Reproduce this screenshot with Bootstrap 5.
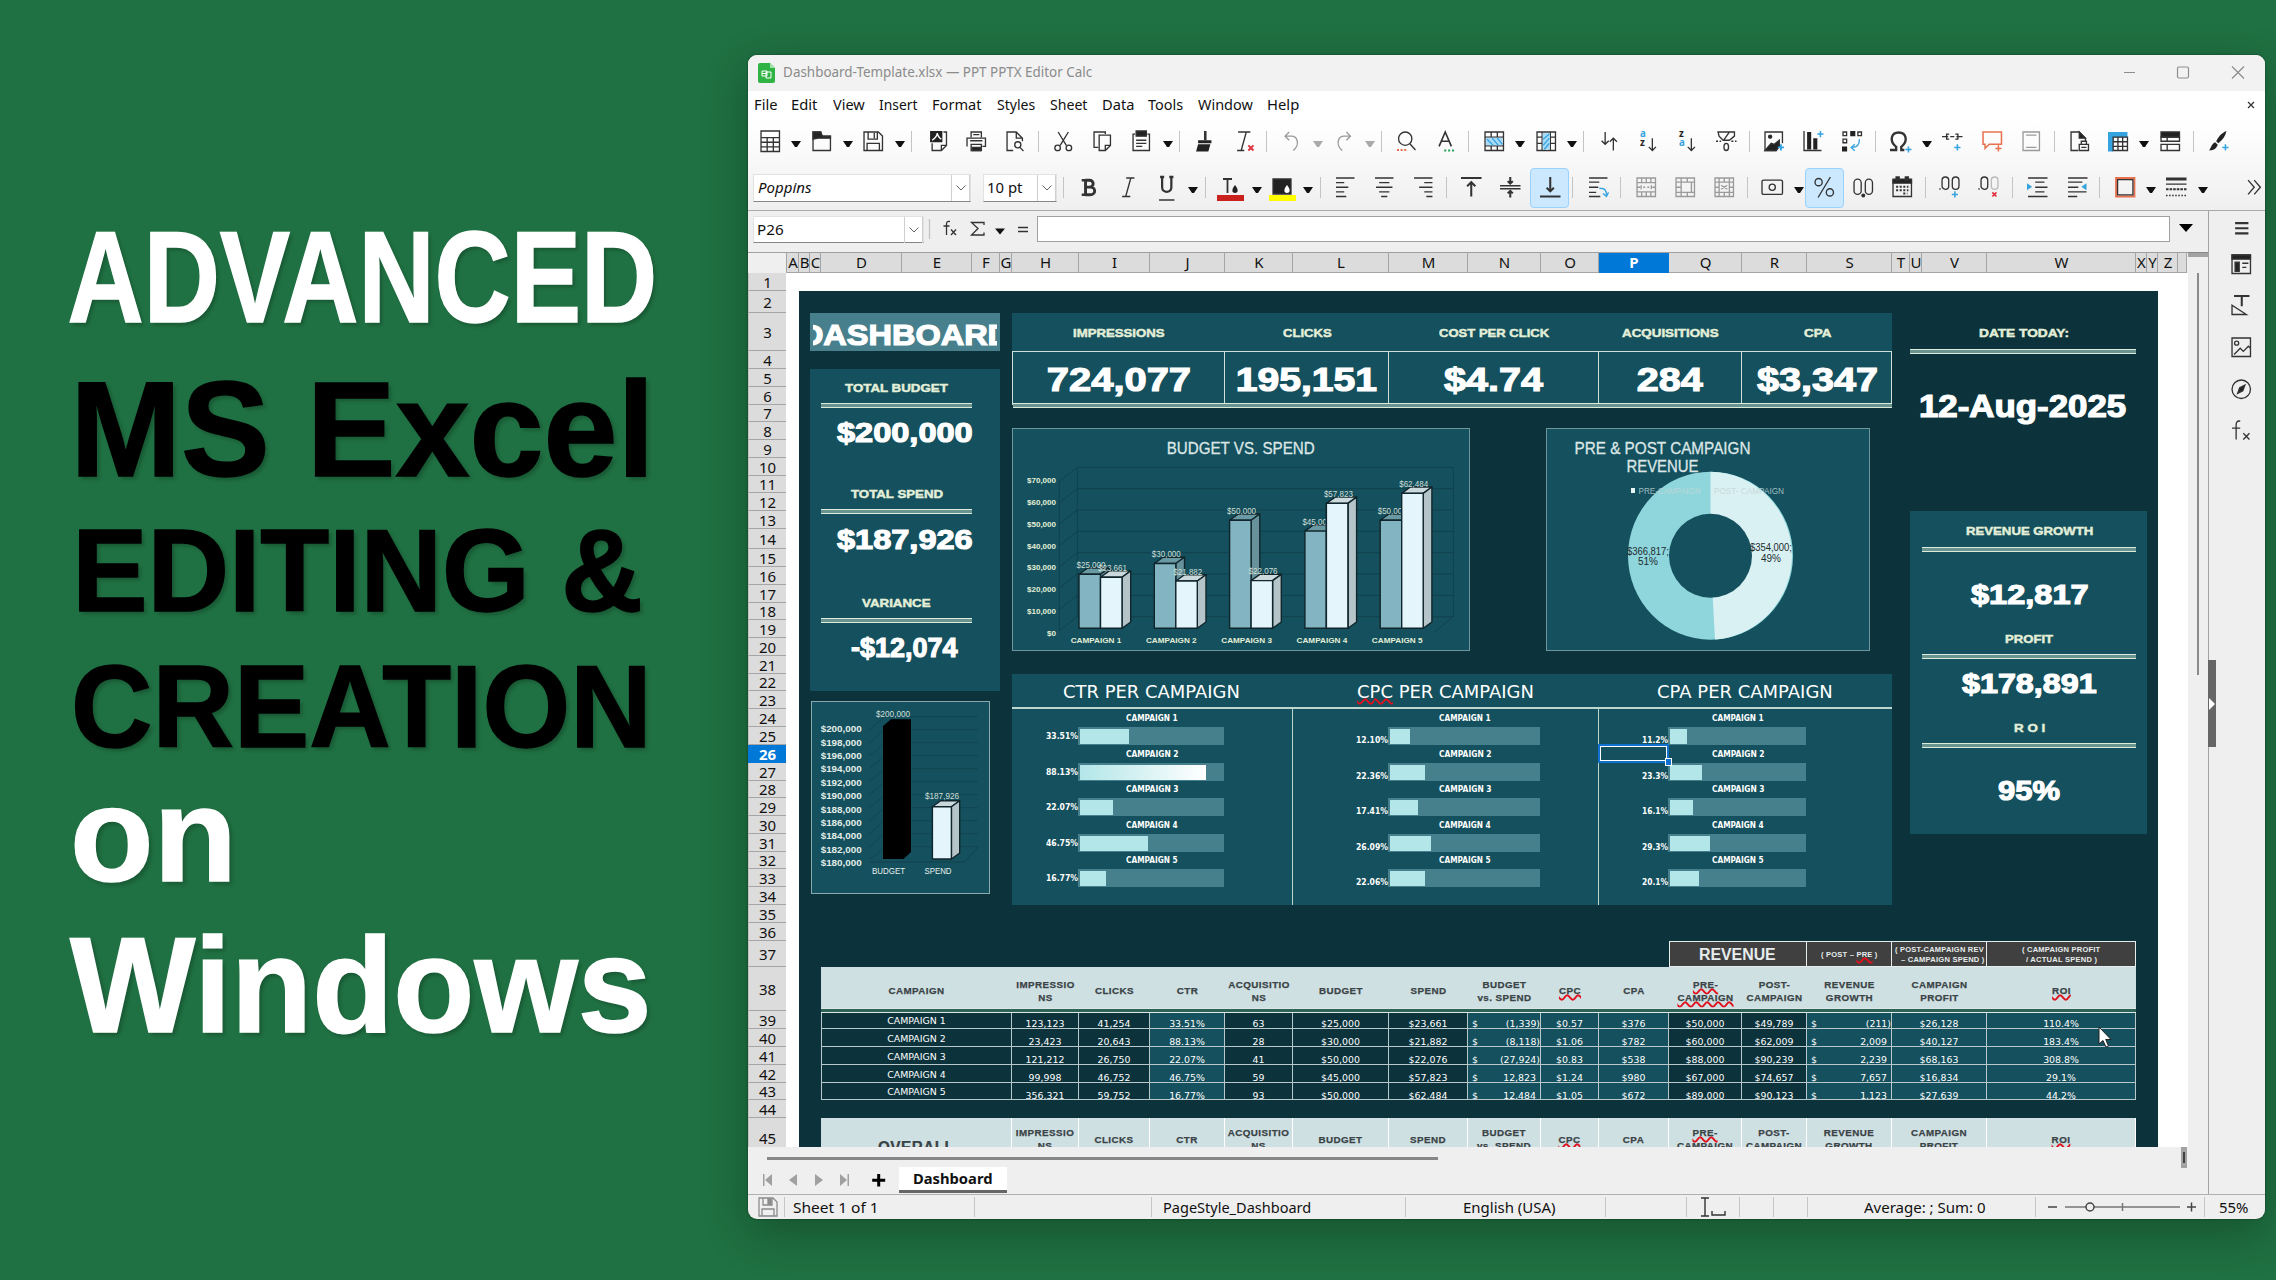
<!DOCTYPE html>
<html lang="en">
<head>
    <meta charset="UTF-8">
    <meta name="viewport" content="width=device-width, initial-scale=1.0">
    <title>Dashboard-Template.xlsx</title>
    <link href="https://cdn.jsdelivr.net/npm/bootstrap@5.3.0/dist/css/bootstrap.min.css" rel="stylesheet">
    <style>
        body {
            width: 2276px;
            height: 1280px;
            overflow: hidden;
            background: #1f7042;
            font-family: "Noto Sans", "Open Sans", sans-serif;
            font-size: 15px;
            line-height: 1;
            color: #111;
        }
        svg { display: block; flex: none; }
        .fit { display: inline-block; white-space: nowrap; text-align: left; flex: none; }
        .fit > span { display: inline-block; transform-origin: 0 50%; }

        /* headline */
        .hero-text {
            width: 748px;
            padding: 201px 0 0 69px;
            font-family: "Liberation Sans", Arial, sans-serif;
            font-weight: 700;
            color: #000;
            text-shadow: 3px 3px 4px rgba(0,0,0,.22);
            -webkit-text-stroke: 1.5px #000;
            flex: none;
        }
        .hero-text div { padding-left: 10px; }
        .hero-text .text-white { -webkit-text-stroke-color: #fff; }
        .line-1 { font-size: 129px; line-height: 152.6px; }
        .line-2 { font-size: 136px; line-height: 151px; }
        .line-3 { font-size: 116px; line-height: 132.2px; }
        .line-4 { font-size: 116px; line-height: 141px; }
        .line-5 { font-size: 134px; line-height: 113px; }
        .line-6 { font-size: 136px; line-height: 189px; }
        .hero-text .line-1, .hero-text .line-6 { padding-left: 1px; }
        .hero-text .line-4, .hero-text .line-5 { padding-left: 6px; }

        /* application window */
        .app-window {
            width: 1517px;
            height: 1164px;
            margin-top: 55px;
            border-radius: 9px;
            background: #efefef;
            box-shadow: 0 14px 44px rgba(0,20,0,.3), 0 0 2px rgba(0,0,0,.5);
            overflow: hidden;
            flex: none;
        }
        .title-bar { height: 36px; background: #f2f2f2; color: #8b8b8b; padding: 0 18px 0 10px; }
        .menu-bar { height: 28px; background: #fff; padding: 0 10px 1px 7px; gap: 14.8px; }
        .tool-area { background: linear-gradient(#fff, #fbfbfb 30%, #efefef); border-bottom: 1.5px solid #a9a9a9; height: 92px; }
        .tool-row { padding-left: 2.4px; }
        .tool-row.first { height: 45px; }
        .tool-row.second { height: 47px; }
        .tool { width: 39.2px; height: 40px; border-radius: 4px; }
        .tool.on { background: #cce8ff; border: 1px solid #99d1ff; }
        .caret { width: 12.7px; padding-left: 1.7px; margin-top: 5px; }
        .caret::before { content: ""; display: block; width: 10px; border: 4.5px solid transparent; border-top: 6px solid #111; border-bottom: 0; }
        .caret.dim::before { border-top-color: #aaa; }
        .bar-sep { width: 8.8px; height: 21px; }
        .bar-sep::before { content: ""; display: block; width: 1px; height: 100%; margin-left: 3px; background: #c4c4c4; }
        .caret + .bar-sep { margin-left: 2.4px; width: 8.8px; }
        .combo { background: #fff; height: 28px; border: 1px solid #e2e2e2; border-bottom: 1.5px solid #868686; padding-left: 4px; }
        .combo .drop { width: 19px; height: 26px; border: 1px solid #cfcfcf; border-width: 0 1px; }
        .font-box { width: 218px; margin-left: 3px; font-style: italic; }
        .size-box { width: 74px; margin: 0 3px 0 12px; }
        .formula-bar { height: 41px; padding: 5px 0 0 5px; }
        .name-box { width: 171px; height: 27px; }
        .formula-input { width: 1133px; height: 26px; background: #fff; border: 1px solid #a0a0a0; margin-left: 8px; }

        /* sheet */
        .col-heads { height: 21px; padding-left: 38px; border-top: 1px solid #a0a0a0; }
        .col-heads > div { background: #dcdcdc; border-right: 1px solid #a5a5a5; border-bottom: 1px solid #a5a5a5; flex: none; overflow: visible; white-space: nowrap; padding-left: 1px; }
        .col-heads > div:first-child { border-left: 1px solid #a5a5a5; }
        .row-heads { width: 39px; height: 874px; overflow: hidden; flex: none; }
        .row-heads > div { background: #dcdcdc; border: 1px solid #a5a5a5; border-top: 0; border-left-color: #c5c5c5; padding-top: 1px; }
        .col-heads .current, .row-heads .current { background: #0078d7; color: #fff; font-weight: 700; border-color: #0078d7; }
        .sheet {
            display: grid;
            position: relative;
            width: 1402px;
            height: 874px;
            margin-left: -1px;
            overflow: hidden;
            background: #fff;
            flex: none;
            font-family: "Liberation Sans", Arial, sans-serif;
            font-weight: 700;
            color: #fff;
        }
        .sheet > * { min-width: 0; min-height: 0; position: relative; }
        .sheet-dark { background: #0c333c; }
        .sheet-panel { background: #14505d; }
        .sheet-title { background: #47808c; font-size: 29px; padding: 6px 3px 0; }
        .sheet-title > div { overflow: hidden; height: 32px; -webkit-text-stroke: 1.2px #fff; }
        .lbl { color: #e3efd8; font-size: 11.5px; padding-top: 3px; -webkit-text-stroke: .45px #e3efd8; }
        .dbl::after, .kpi-value::after {
            content: "";
            position: absolute;
            left: 0;
            right: 0;
            bottom: -3px;
            height: 5px;
            border: 1px solid #dcebdc;
            border-width: 1px 0;
            background: #6a9490;
        }
        .kpi-value { border: 1px solid #cfe0d4; border-width: 1px 1px 0 0; font-size: 34px; padding-top: 1px; }
        .kpi-value::after { right: -1px; }
        .kpi-first { border-left-width: 1px; }
        .big { font-size: 28px; padding-top: 2px; }
        .kpi-value .fit, .big .fit { -webkit-text-stroke: 1.2px #fff; }
        .date-value { font-size: 31px; padding-top: 4px; }
        .bar-title { font: 400 18.5px "DejaVu Sans", sans-serif; border-bottom: 2px solid #bfd6cf; padding: 2px 2px 0 0; }
        .bar-split { border-right: 1.5px solid #bfd6cf; }
        .bar-name { font: 700 8px "DejaVu Sans", sans-serif; }
        .bar-track { background: #47808d; padding: 2px; margin-left: -1px; margin-right: 1px; }
        .bar-fill { height: 15px; background: #b3e6e8; }
        .bar-fill.peak { background: linear-gradient(90deg, #b3e6e8, #fff); }
        .bar-pct { font: 700 8px "DejaVu Sans", sans-serif; padding: 9px 1px 0 0; }
        .bar-pct.mid { padding-top: 1px; }
        .cell-cursor { border: 2px solid #1271cf; outline: 1px solid #1271cf; outline-offset: -1px; box-shadow: inset 0 0 0 1px #fff; margin: -1px 0 0 -1px; }
        .cell-cursor::after { content: ""; position: absolute; right: -5px; bottom: -5px; width: 7px; height: 8px; background: #1271cf; border: 1px solid #fff; }
        .rev-head { background: #404040; border: 1px solid #e6eded; border-left-width: 0; font-size: 7px; line-height: 10.5px; color: #e6ecec; letter-spacing: .2px; white-space: nowrap; padding-top: 2px; }
        .rev-head.first { border-left-width: 1px; font-size: 16px; letter-spacing: 0; }
        .th-cell { background: #cfe0e3; color: #3a4346; font-size: 9.8px; line-height: 13px; letter-spacing: .45px; padding-top: 4px; border-bottom: 1px solid #e9f1f1; -webkit-text-stroke: .25px #3a4346; }
        .th-cell.ruled { border-right: 1px solid #fff; padding-top: 2px; }
        .th-overall { font-size: 16px; }
        .td-cell { font: 400 9.4px "DejaVu Sans", sans-serif; border: 1px solid #b9c8cb; border-width: 0 1px 1px 0; overflow: hidden; white-space: nowrap; padding-top: 8px; }
        .td-cell.name { border-left-width: 1px; padding-top: 1px; }
        .td-rule { align-self: end; height: 5px; background: #2e6157; border: 1px solid #dbe9e4; border-width: 1px 0; margin-bottom: -2px; }
        .wavy { text-decoration: underline wavy #e0101c 1.5px; text-underline-offset: 0; text-decoration-skip-ink: none; }
        .chart-frame { align-self: start; justify-self: start; }
        .sheet > .pointer { position: absolute; left: 1312px; top: 753px; }

        /* scroll bars, side bar, tabs and status */
        .v-scroll { width: 20px; padding-left: 9px; padding-top: 10px; }
        .v-thumb { width: 2px; height: 402px; background: #8a8a8a; }
        .v-split { width: 20px; height: 5px; margin: -10px 0 0 -9px; background: #a3a3a3; border-top: 1px solid #888; }
        .tab-area { height: 47px; }
        .h-thumb { width: 671px; height: 2.5px; margin: 10px 0 8px 19px; background: #878787; }
        .sheet-tab { width: 108px; height: 26px; background: #fff; border-bottom: 3.5px solid #666; margin-left: 9px; }
        .side-bar { width: 56px; border-left: 1.5px solid #a2a2a2; padding: 7px 0 0 9px; gap: 21.2px; position: relative; }
        .side-bar svg:nth-of-type(1) { margin-bottom: -6px; }
        .side-handle { position: absolute; left: -1px; top: 449px; width: 8px; height: 87px; background: #666; }
        .side-bar .side-handle svg { margin: 0; }
        .status-bar { height: 25px; border-top: 1.5px solid #b0b0b0; padding-left: 10px; }
        .st { height: 20px; border-right: 1px solid #c6c6c6; }
        .st-save { width: 27px; } .st-sheet { width: 190px; } .st-blank { width: 177px; } .st-style { width: 254px; }
        .st-lang { width: 200px; } .st-ins { width: 81px; } .st-mode { width: 53px; } .st-sig { width: 34px; }
        .st-sum { width: 228px; } .st-zoom { width: 169px; }
    </style>
</head>
<body class="d-flex">
    <div class="hero-text">
        <div class="line-1 text-white"><span class="fit" data-w="583">ADVANCED</span></div>
        <div class="line-2"><span class="fit" data-w="567">MS Excel</span></div>
        <div class="line-3"><span class="fit" data-w="561">EDITING &amp;</span></div>
        <div class="line-4"><span class="fit" data-w="569">CREATION</span></div>
        <div class="line-5 text-white"><span class="fit" data-w="154">on</span></div>
        <div class="line-6 text-white"><span class="fit" data-w="577">Windows</span></div>
    </div>

    <div class="app-window d-flex flex-column">
        <div class="title-bar d-flex align-items-center">
            <svg width="18" height="20" viewBox="0 0 18 20"><path d="M2 0h10l5 5v13a2 2 0 0 1-2 2H2a2 2 0 0 1-2-2V2a2 2 0 0 1 2-2z" fill="#2fb344"/><path d="M12 0l5 5h-5z" fill="#a5e3ae"/><path d="M4 8h5v5H4zM4 10.500h5M8 9h5v6H8z" fill="none" stroke="#fff"/></svg>
            <span class="fit ms-2 pb-1" data-w="308">Dashboard-Template.xlsx — PPT PPTX Editor Calc</span>
            <svg class="ms-auto" width="124" height="16" viewBox="0 0 124 16" fill="none" stroke="#8d8d8d" stroke-width="1.2"><path d="M1 7.500h11"/><rect x="54.500" y="2" width="11" height="11" rx="1.500"/><path d="M109 1.500l12 12M121 1.500l-12 12"/></svg>
        </div>
        <div class="menu-bar d-flex align-items-center" id="menuBar">
            <svg class="ms-auto order-last" width="8" height="8" viewBox="0 0 8 8" stroke="#333" stroke-width="1.200"><path d="M1 1l6 6M7 1L1 7"/></svg>
        </div>
        <div class="tool-area">
            <div class="tool-row first d-flex align-items-center" id="standardBar"></div>
            <div class="tool-row second d-flex align-items-center" id="formatBar">
                <div class="combo font-box d-flex align-items-center justify-content-between"><span class="fit" data-w="54">Poppins</span><span class="drop d-flex align-items-center justify-content-center"><svg width="10" height="6" viewBox="0 0 10 6" fill="none" stroke="#666"><path d="M.5.5L5 5 9.500.5"/></svg></span></div>
                <div class="combo size-box d-flex align-items-center justify-content-between"><span class="fit" data-w="35">10 pt</span><span class="drop d-flex align-items-center justify-content-center"><svg width="10" height="6" viewBox="0 0 10 6" fill="none" stroke="#666"><path d="M.5.5L5 5 9.500.5"/></svg></span></div>
            </div>
        </div>

        <div class="d-flex flex-grow-1">
            <div class="d-flex flex-column">
                <div class="formula-bar d-flex">
                    <div class="combo name-box d-flex align-items-center justify-content-between"><span class="fit" data-w="25">P26</span><span class="drop d-flex align-items-center justify-content-center"><svg width="10" height="6" viewBox="0 0 10 6" fill="none" stroke="#666"><path d="M.5.5L5 5 9.500.5"/></svg></span></div>
                    <svg width="105" height="26" viewBox="0 0 105 26" fill="none" stroke="#333" stroke-width="1.300"><path d="M5.500 3v20" stroke="#c4c4c4"/><path d="M26 5.500c-3-.8-3.500 1-3.500 3V19M19.500 10h6M27 13.500l5 5.500M32 13.500L27 19"/><path d="M60 9V6.500H47.500l6.500 6-6.500 6.500H60v-2.500"/><path d="M71 12.500h10l-5 6z" fill="#111" stroke="none"/><path d="M94 11.500h10M94 15.500h10"/></svg>
                    <div class="formula-input"></div>
                    <svg class="ms-2" width="16" height="22" viewBox="0 0 16 22"><path d="M1 8h14l-7 8z" fill="#000"/></svg>
                </div>
                <div class="d-flex">
                    <div>
                        <div class="col-heads d-flex" id="colHeads"></div>
                        <div class="d-flex">
                            <div class="row-heads" id="rowHeads"></div>
                            <div class="sheet" id="sheet">
                                <div class="sheet-dark" data-ref="B2:Y45"></div>

                                <div class="sheet-title" data-ref="C3:F3"><div class="d-flex align-items-center justify-content-center"><span class="fit" data-w="209">DASHBOARD</span></div></div>
                                <div class="sheet-panel" data-ref="C5:F22"></div>
                                <div class="lbl dbl d-flex align-items-center justify-content-center" data-ref="D5:E6"><span class="fit" data-w="103">TOTAL BUDGET</span></div>
                                <div class="big d-flex align-items-center justify-content-end" data-ref="D7:E9"><span class="fit" data-w="135">$200,000</span></div>
                                <div class="lbl dbl d-flex align-items-center justify-content-center" data-ref="D11:E12"><span class="fit" data-w="92">TOTAL SPEND</span></div>
                                <div class="big d-flex align-items-center justify-content-end" data-ref="D13:E15"><span class="fit" data-w="135">$187,926</span></div>
                                <div class="lbl dbl d-flex align-items-center justify-content-center" data-ref="D17:E18"><span class="fit" data-w="69">VARIANCE</span></div>
                                <div class="big d-flex align-items-center justify-content-center ps-3" data-ref="D19:E21"><span class="fit" data-w="106">-$12,074</span></div>

                                <div class="sheet-panel" data-ref="H3:S6"></div>
                                <div class="lbl d-flex align-items-center justify-content-center" data-ref="H3:J3"><span class="fit" data-w="92">IMPRESSIONS</span></div>
                                <div class="lbl d-flex align-items-center justify-content-center" data-ref="K3:L3"><span class="fit" data-w="49">CLICKS</span></div>
                                <div class="lbl d-flex align-items-center justify-content-center" data-ref="M3:O3"><span class="fit" data-w="111">COST PER CLICK</span></div>
                                <div class="lbl d-flex align-items-center justify-content-center" data-ref="P3:Q3"><span class="fit" data-w="97">ACQUISITIONS</span></div>
                                <div class="lbl d-flex align-items-center justify-content-center" data-ref="R3:S3"><span class="fit" data-w="27">CPA</span></div>
                                <div class="kpi-value kpi-first d-flex align-items-center justify-content-center" data-ref="H4:J6"><span class="fit" data-w="142">724,077</span></div>
                                <div class="kpi-value d-flex align-items-center justify-content-center" data-ref="K4:L6"><span class="fit" data-w="138">195,151</span></div>
                                <div class="kpi-value d-flex align-items-center justify-content-center" data-ref="M4:O6"><span class="fit" data-w="99">$4.74</span></div>
                                <div class="kpi-value d-flex align-items-center justify-content-center" data-ref="P4:Q6"><span class="fit" data-w="65">284</span></div>
                                <div class="kpi-value d-flex align-items-center justify-content-center" data-ref="R4:S6"><span class="fit" data-w="120">$3,347</span></div>
                                <div class="lbl dbl d-flex align-items-center justify-content-center" data-ref="U3:W3"><span class="fit" data-w="89">DATE TODAY:</span></div>
                                <div class="big date-value d-flex align-items-center justify-content-center" data-ref="U4:W9"><span class="fit" data-w="206">12-Aug-2025</span></div>

                                <div class="sheet-panel" data-ref="U13:X30"></div>
                                <div class="lbl dbl d-flex align-items-center justify-content-center" data-ref="V13:W14"><span class="fit" data-w="127">REVENUE GROWTH</span></div>
                                <div class="big d-flex align-items-center justify-content-center" data-ref="V16:W18"><span class="fit" data-w="117">$12,817</span></div>
                                <div class="lbl dbl d-flex align-items-center justify-content-center" data-ref="V19:W20"><span class="fit" data-w="48">PROFIT</span></div>
                                <div class="big d-flex align-items-center justify-content-center" data-ref="V21:W23"><span class="fit" data-w="134">$178,891</span></div>
                                <div class="lbl dbl d-flex align-items-center justify-content-center" data-ref="V24:W25"><span class="fit" data-w="31">R O I</span></div>
                                <div class="big d-flex align-items-center justify-content-center" data-ref="V26:W30"><span class="fit" data-w="62">95%</span></div>

                                <svg class="chart-frame" data-ref="H8" style="margin-top:6px" id="spendChart" width="458" height="223" viewBox="0 0 458 223" font-family="Liberation Sans"></svg>

                                <svg class="chart-frame" data-ref="O8" style="margin:6px 0 0 5px" width="324" height="223" viewBox="0 0 324 223" font-family="Liberation Sans" font-weight="400" text-anchor="middle">
                                    <rect x=".5" y=".5" width="323" height="222" fill="#14505d" stroke="#6d979d"/>
                                    <g fill="#dce6e6" font-size="16" stroke="#dce6e6" stroke-width=".3"><text x="116.500" y="26" textLength="176" lengthAdjust="spacingAndGlyphs">PRE &amp; POST CAMPAIGN</text><text x="116.500" y="44" textLength="72" lengthAdjust="spacingAndGlyphs">REVENUE</text></g>
                                    <ellipse cx="164.500" cy="127.700" rx="82.500" ry="84" fill="#8fd6dc"/>
                                    <path d="M164.500 43.700a82.500 84 0 0 1 4.500 167.800l-4.500-83.800z" fill="#daf1f3"/>
                                    <ellipse cx="164.500" cy="127.700" rx="41.500" ry="42" fill="#14505d"/>
                                    <rect x="85" y="60" width="4" height="5" fill="#e9f6f7"/>
                                    <g font-size="8.500" fill="#c3d6d8" opacity=".8"><text x="123.500" y="65.500" textLength="62" lengthAdjust="spacingAndGlyphs">PRE-CAMPAIGN</text><text x="203" y="65.500" textLength="70" lengthAdjust="spacingAndGlyphs">POST- CAMPAIGN</text></g>
                                    <g font-size="10" fill="#1d2b2e"><text x="102" y="126.500" textLength="42" lengthAdjust="spacingAndGlyphs">$366,817;</text><text x="102" y="137">51%</text><text x="225" y="123" textLength="42" lengthAdjust="spacingAndGlyphs">$354,000;</text><text x="225" y="133.500">49%</text></g>
                                </svg>

                                <svg class="chart-frame" data-ref="C23" style="margin:10px 0 0 1px" id="totalChart" width="179" height="193" viewBox="0 0 179 193" font-family="Liberation Sans"></svg>

                                <div class="sheet-panel" data-ref="H22:S34"></div>
                                <div class="bar-split" data-ref="H24:K34"></div>
                                <div class="bar-split" data-ref="L24:O34"></div>
                                <div class="bar-title d-flex align-items-center justify-content-center" data-ref="H22:K23"><span class="fit" data-w="175">CTR PER CAMPAIGN</span></div>
                                <div class="bar-title d-flex align-items-center justify-content-center" data-ref="L22:O23"><span class="fit" data-w="175"><span class="wavy">CPC</span> PER CAMPAIGN</span></div>
                                <div class="bar-title d-flex align-items-center justify-content-center" data-ref="P22:S23"><span class="fit" data-w="174">CPA PER CAMPAIGN</span></div>
                            </div>
                        </div>
                    </div>
                    <div class="v-scroll"><div class="v-split"></div><div class="v-thumb mt-3"></div></div>
                </div>
                <div class="tab-area">
                    <div class="d-flex">
                        <div class="h-thumb"></div>
                        <svg class="ms-auto" style="margin-right:21px" width="6" height="21" viewBox="0 0 6 21"><path d="M0 0h6v21H0z" fill="#a3a3a3"/><path d="M3 5v11" stroke="#222" stroke-width="1.500"/></svg>
                    </div>
                    <div class="d-flex align-items-center" style="margin-top:-1px">
                        <svg width="142" height="26" viewBox="0 0 142 26" fill="#a0a0a0"><path d="M24 7v12l-7-6zM15 7h1.500v12H15zM49 7v12l-8-6zM67 7v12l8-6zM92 7v12l7-6zM99.500 7h1.500v12h-1.500z"/><path d="M129.200 7h3v4.700h5v3h-5v4.700h-3v-4.700h-5v-3h5z" fill="#000"/></svg>
                        <div class="sheet-tab d-flex align-items-center justify-content-center fw-bold"><span class="fit" data-w="78">Dashboard</span></div>
                    </div>
                </div>
            </div>
            <div class="side-bar d-flex flex-column align-items-center" id="sideBar">
                <div class="side-handle d-flex align-items-center"><svg width="8" height="12" viewBox="0 0 8 12"><path d="M1 0l6 6-6 6z" fill="#fff"/></svg></div>
            </div>
        </div>

        <div class="status-bar d-flex align-items-center">
            <div class="st st-save d-flex align-items-center"><svg width="20" height="20" viewBox="0 0 20 20" fill="none" stroke="#8b8b8b" stroke-width="1.300"><path d="M1 1h14l4 4v14H1zM5 1v7h9V1M4 19v-7h12v7"/><path d="M10 2h3v5h-3z" fill="#8b8b8b"/></svg></div>
            <div class="st st-sheet d-flex align-items-center ps-2"><span class="fit" data-w="83">Sheet 1 of 1</span></div>
            <div class="st st-blank"></div>
            <div class="st st-style d-flex align-items-center ps-2"><span class="fit ms-1" data-w="146">PageStyle_Dashboard</span></div>
            <div class="st st-lang d-flex align-items-center justify-content-center ps-1"><span class="fit ms-1" data-w="91">English (USA)</span></div>
            <div class="st st-ins"></div>
            <div class="st st-mode d-flex align-items-center justify-content-center"><svg width="27" height="20" viewBox="0 0 27 20" fill="none" stroke="#333" stroke-width="1.400"><path d="M1 1h8M5 1v18M1 19h8M12 14v4h13v-4"/></svg></div>
            <div class="st st-sig"></div>
            <div class="st st-sig"></div>
            <div class="st st-sum d-flex align-items-center ps-5"><span class="fit ms-2" data-w="121">Average: ; Sum: 0</span></div>
            <div class="st st-zoom d-flex align-items-center ps-2"><svg width="154" height="16" viewBox="0 0 154 16" fill="none" stroke="#444" stroke-width="1.500"><path d="M4 8h9M143 8h9M147.500 3.500v9"/><path d="M21 8h115M78.500 4v8" stroke="#777"/><circle cx="46" cy="8" r="4" fill="#efefef"/></svg></div>
            <span class="fit" style="margin-left:14px" data-w="29">55%</span>
        </div>
    </div>

    <script src="https://cdn.jsdelivr.net/npm/bootstrap@5.3.0/dist/js/bootstrap.bundle.min.js"></script>
    <script>
        const cols = 'ABCDEFGHIJKLMNOPQRSTUVWXYZ';
        const colWidths = [13, 11, 11, 81, 70, 28, 12, 67, 71, 75, 68, 96, 79, 73, 58, 70, 73, 65, 85, 18, 12, 65, 149, 11, 11, 20, 9];
        const rowHeights = [18, 22, 38, 18, 18, 18, 17, 18, 18, 18, 17, 18, 18, 20, 18, 18, 18, 17, 18, 18, 18, 17, 18, 18, 18, 18, 18, 17, 18, 18, 18, 17, 18, 18, 18, 18, 26, 44, 18, 18, 18, 18, 17, 18, 41];

        const G = '#9a9a9a', B = '#35a3e0', K = '#222', R = '#e8714f';
        // 20x20 icons
        const icons = {
            new: '<path d="M1 0v20h18V0zM1 6.500h18M1 11h18M1 15.500h18M7 6.500V20M13 6.500V20"/>',
            open: `<path d="M1 4v15h17V5h-8L8.500 1H1z"/><path d="M1 1h7.500L10 5h8v2H6L1 8z" fill="${K}"/>`,
            save: '<path d="M1 1h14l4 4v14H1zM5 1v7h9V1M4 19v-7h12v7M11 2v5"/>',
            pdf: `<path d="M16 1h3v13l-5 5H5v-7M19 14h-5v5"/><path d="M3 0h12v11H3z" fill="${K}" stroke="none"/><path d="M5 9c3-2 5-5 5-7 1 4 2 5 4 6" stroke="#fff"/>`,
            print: `<path d="M5 6V1h10v5M1 15V7h18v8h-3M7 3.500h6M4 9.500h12"/><path d="M5 13h10v6H5z" /><path d="M6 16h8v3H6z" fill="${K}"/>`,
            preview: '<path d="M8 19H2V1h9l6 6v3M11 1v6h6"/><circle cx="12.500" cy="13.500" r="3"/><path d="M14.500 16l3.500 3.500"/>',
            cut: '<path d="M5 1l8 13M15 1L7 14"/><circle cx="4.500" cy="16.500" r="2.700"/><circle cx="15.500" cy="16.500" r="2.700"/>',
            copy: '<path d="M6 16H2V1h11v2M7 4h11v10l-5 5H7zM18 14h-5v5"/>',
            paste: `<path d="M4 3H2v16h16V3h-2M5 9h10M5 12h10M5 15h6"/><path d="M5 0h10v5H5z" fill="${K}"/>`,
            brush: `<path d="M11 0v9" stroke-width="2.500"/><path d="M4 9h13v3H4zM4 13h12l-2 7H2z" fill="${K}" stroke="none"/>`,
            clear: '<path d="M4 1h12M12 1L7 19M3 19h7"/><path d="M14 14l5 5M19 14l-5 5" stroke="#e0303c" stroke-width="1.800"/>',
            undo: `<path d="M7 1L3 5l4 4M3 5h6c6 0 9 8 2 14" stroke="${G}"/>`,
            redo: `<path d="M13 1l4 4-4 4M17 5h-6c-6 0-9 8-2 14" stroke="${G}"/>`,
            find: `<circle cx="9" cy="7.500" r="6.500"/><path d="M13.500 12.500l5.500 6"/><path d="M1 18.500h10" stroke="${R}" stroke-width="2" stroke-dasharray="2 1.500"/>`,
            spell: '<path d="M3 15L9 1l6 14M5.500 10h7.500" stroke-width="1.600"/><path d="M8 19h10" stroke="#25a55a" stroke-width="2" stroke-dasharray="2 1.800"/>',
            row: `<path d="M1 1h18v18H1zM1 6h18M1 14.500h18M7 1v5M13 1v5M7 14.500V19M13 14.500V19"/><path d="M2 6.500h16V14H2z" fill="#a8dbf7" stroke="none"/><path d="M3 8l6 6M8 7l6 7M13 7l5 6" stroke="${B}"/>`,
            colm: `<path d="M1 1h18v18H1zM6 1v18M14 1v18M1 6h5M1 12h5M14 6h5M14 12h5"/><path d="M6.500 2h7v16h-7z" fill="#a8dbf7" stroke="none"/><path d="M7 8l6-5M7 14l6-7M8 18l5-6" stroke="${B}"/>`,
            sort: '<path d="M6 1v12M2.500 9.500L6 13l3.500-3.500M14 19V7M10.500 10.500L14 7l3.500 3.500"/>',
            az: `<text x="2" y="6" font-size="9.500" fill="${B}">a</text><text x="2" y="15" font-size="9.500" fill="${K}">z</text><path d="M14 7v12M10.500 15.500L14 19l3.500-3.500"/>`,
            za: `<text x="2" y="6" font-size="9.500" fill="${K}">z</text><text x="2" y="15" font-size="9.500" fill="${B}">a</text><path d="M14 7v12M10.500 15.500L14 19l3.500-3.500"/>`,
            filter: '<path d="M2 1h16v4l-5 4H7L3 5zM7.500 9L13 1M10 12c-3 0-3 7 0 7s3-7 0-7z"/><path d="M0 10h5M15 10h5" stroke-dasharray="2 1.500"/>',
            image: `<path d="M18 12V1H1v18h11"/><path d="M1 19l6-7 3 1 5-4v6l-3 4z" fill="${K}"/><circle cx="6" cy="5.500" r="1.500" fill="${K}"/><path d="M16.500 13v6M13.500 16h6" stroke="${B}" stroke-width="1.800"/>`,
            chart: `<path d="M1 0v19h17"/><path d="M4 1h4v17H4zM10 7h4v11h-4z" fill="${K}" stroke="none"/><path d="M17 0v6M14 3h6" stroke="${B}" stroke-width="1.500"/>`,
            pivot: `<path d="M1 1h3.500v3.500H1zM15.500 1H19v3.500h-3.500zM1 8h3.500v3.500H1z"/><path d="M8 0h5v5H8zM0 15h5v5H0z" fill="${K}" stroke="none"/><path d="M17 8c0 5-2 8-7 8M12.500 13L9 16.200l3.500 3" stroke="${B}"/>`,
            omega: `<path d="M0 18.500h6v-3C-1 10 1 1.500 8.500 1.500S18 10 11 15.500v3h3" stroke-width="2.300"/><path d="M18 15v6M15 18h6" stroke="${B}" stroke-width="1.500"/>`,
            link: `<path d="M0 5.500h6M14 5.500h6M7 3H4.500v5H7M13 3h2.500v5H13M8 5.500h4"/><path d="M15 13v6M12 16h6" stroke="${B}" stroke-width="1.500"/>`,
            comment: `<path d="M1 1h18v12H7l-4 4v-4H1zM16 14v6M13 17h6" stroke="${R}" stroke-width="1.500"/>`,
            header: `<path d="M2 1h16v18H2zM5 4h10M5 16h10" stroke="${G}"/>`,
            lock: `<path d="M9 19H2V1h8l6 6v3"/><path d="M10 1l6 6h-6z" fill="${K}"/><path d="M10 13h9v6h-9zM12 13v-3h5v3M12 16h5"/>`,
            freeze: `<path d="M0 1h19v5H5v14H0z" fill="${B}" stroke="none"/><path d="M5 6h14v13H5zM5 10.500h14M5 15h14M9.700 6v13M14.300 6v13"/>`,
            split: `<path d="M1 1h18v5H1z" fill="${K}"/><path d="M1 6h18v4H1zM1 13h18v6H1zM7 6v4M7 13v6"/>`,
            pen: `<path d="M18 0c-5 2-8 6-10 10l2 2c4-3 7-7 8-12zM7 11l2.500 2.500C8 18 5 19 1 19c2-2 2-6 6-8z" fill="${K}" stroke="none"/><path d="M17 13v6M14 16h6" stroke="${B}" stroke-width="1.500"/>`,
            bold: `<path d="M2 1.500h4M2 18.500h4" stroke-width="3"/><path d="M6.500 1.500v17M6 1.500h5c6 0 6 8 0 8H6M6 9.500h6c7 0 7 9 0 9H6" stroke-width="3.400"/>`,
            italic: '<path d="M8 1h8M4 19h8M12.500 1l-5 18"/>',
            under: '<path d="M5 0v10c0 6 9 6 9 0V0M3 0h4M12 0h4" stroke-width="2.200"/><path d="M2 22.500h15" stroke-width="1.500"/>',
            color: `<path d="M3 1h9M7.500 1v14" stroke-width="1.800"/><path d="M15 7c4 5 3 8 0 8s-4-3 0-8z" fill="${K}" stroke="none"/><path d="M-3 17h27v6H-3z" fill="#c9211e" stroke="none"/>`,
            fill: `<path d="M1 1h18v15H1z" fill="${K}"/><path d="M15 7c4 5 3 8 0 8s-4-3 0-8z" fill="#fff" stroke="none"/><path d="M-3 17h27v6H-3z" fill="#ff0" stroke="none"/>`,
            left: '<path d="M1 1h18M1 5.500h8M1 10h12M1 14.500h8M1 19h10"/>',
            center: '<path d="M1 1h18M5 5.500h10M2 10h16M5 14.500h10M7 19h6"/>',
            right: '<path d="M1 1h18M11 5.500h8M6 10h13M11 14.500h8M13 19h6"/>',
            top: '<path d="M0 1h20" stroke-width="1.800"/><path d="M10 19V5M6 9l4-4 4 4" stroke-width="2"/>',
            middle: '<path d="M0 8.500h20M0 11.500h20" /><path d="M10 0v6M7.500 4L10 6.500 12.500 4M10 20v-6M7.500 16l2.500-2.500 2.500 2.500" stroke-width="2"/>',
            bottom: '<path d="M0 19h20" stroke-width="1.800"/><path d="M10 0v14M6.500 10.500L10 14l3.500-3.500" stroke-width="2"/>',
            wrap: `<path d="M1 1h18M1 5h10M1 10h9M1 15h7M1 19h11"/><path d="M11 11c6 0 7 2 7 7M14.500 16l3.500 3 2-4" stroke="${B}"/>`,
            merge1: `<path d="M1 1h18v18H1zM1 5.500h18M1 14.500h18M5.500 1v4.500M10 1v4.500M14.500 1v4.500M5.500 14.500V19M10 14.500V19M14.500 14.500V19M1 10h3M16 10h3M5 8v4M15 8v4M7 10h2M11 10h2" stroke="${G}"/>`,
            merge2: `<path d="M1 1h18v18H1zM6 1v18M6 5h13M6 15h13M1 5h5M1 10h5M1 15h5M12 1v4M12 15v4M16 5v10" stroke="${G}"/>`,
            merge3: `<path d="M1 1h18v18H1zM5 5h10v10H5zM5 1v4M10 1v4M15 1v4M5 15v4M10 15v4M15 15v4M1 5h4M1 10h4M1 15h4M15 5h4M15 10h4M15 15h4M7 8l6 4M13 8l-6 4" stroke="${G}"/>`,
            money: '<rect x="0" y="3" width="20" height="14" rx="1.500"/><circle cx="10" cy="10" r="3"/>',
            percent: '<path d="M16 0L4 20"/><circle cx="4.500" cy="5" r="3.500"/><circle cx="15.500" cy="15" r="3.500"/>',
            number: `<rect x="1" y="2" width="7" height="15" rx="3.500"/><rect x="12" y="2" width="7" height="15" rx="3.500"/><circle cx="10" cy="18" r="1.300" fill="${K}"/>`,
            date: `<path d="M1 3h18v16H1z"/><path d="M1 2h18v4H1zM4 0h3v3H4zM13 0h3v3h-3z" fill="${K}"/><path d="M4 9.500h12M4 13h12M11 16h4" stroke-width="2" stroke-dasharray="2 1.500"/>`,
            decAdd: `<rect x="2" y="0" width="6.500" height="12" rx="3.200"/><rect x="12" y="0" width="6.500" height="12" rx="3.200"/><path d="M0 11v1.500"/><path d="M14.500 14v6M11.500 17h6" stroke="${B}" stroke-width="1.500"/>`,
            decDel: `<rect x="2" y="0" width="6.500" height="12" rx="3.200"/><rect x="12" y="0" width="6.500" height="12" rx="3.200" stroke="#bbb"/><path d="M0 11v1.500"/><path d="M13 15l4 4M17 15l-4 4" stroke="#e0303c" stroke-width="1.600"/>`,
            indentIn: `<path d="M1 1h19M8 5h9M8 10h12M8 14.500h9M1 19h19" /><path d="M0 6v7l5-3.500z" fill="${B}" stroke="none"/>`,
            indentOut: `<path d="M1 1h19M1 5h14M1 10h10M1 14.500h18M1 19h9"/><path d="M19 6v7l-5-3.500z" fill="${B}" stroke="none"/>`,
            border: `<path d="M1 1h18v18H1z" stroke="${R}" stroke-width="1.800"/><path d="M2.500 2.500h15v15h-15z"/>`,
            lines: '<path d="M0 2h20" stroke-width="3"/><path d="M0 7h20"/><path d="M0 12h20" stroke-width="2" stroke-dasharray="2.500 1"/><path d="M0 18h20" stroke-width="1.500" stroke-dasharray="1.500 1.500"/>',
            more: '<path d="M3 3l6 7-6 7M9 3l6 7-6 7"/>',
            menu: '<path d="M4 5h13M4 10h13M4 15h13" stroke-width="2"/>',
            props: `<path d="M1 1h18v18H1z"/><path d="M1 1h18v4H1zM4 8h4v9H4z" fill="${K}"/><path d="M11 9h6M11 13h4"/>`,
            styles: '<path d="M3 1h15M10.500 1v10" stroke-width="2"/><path d="M1 10v9h14z"/>',
            gallery: '<path d="M1 1h18v18H1z"/><circle cx="5.500" cy="6" r="2"/><path d="M3 17l6-6 3 3 5-5 2 2"/>',
            compass: `<circle cx="10" cy="10" r="9"/><path d="M13.500 6l-2 5.500L6.500 14l2-5.500z" fill="${K}"/>`,
            fx: '<path d="M9 1C5.500.500 5 3 5 5v14M1 8h8M12 13l6 6M18 13l-6 6"/>'
        };
        const icon = (name, size = 20.5) => `<svg width="${size}" height="${size}" viewBox="0 0 20 20" overflow="visible" fill="none" stroke="#333" stroke-width="1.300" font-weight="700" font-family="Noto Sans">${icons[name].replace(/<text /g, '<text stroke="none" ')}</svg>`;

        // "^" is a drop-down arrow, "|" a separator, "*" marks a pressed button
        function toolbar(id, spec) {
            const html = spec.split(' ').map(t => {
                if (t === '|') return '<span class="bar-sep"></span>';
                if (t === '^') return '<span class="caret"></span>';
                if (t === '~') return '<span class="caret dim"></span>';
                const on = t[0] === '*';
                const name = on ? t.slice(1) : t;
                const size = name === 'bold' ? 17 : name === 'color' || name === 'fill' ? 20 : 20.5;
                return `<span class="tool d-flex align-items-center justify-content-center ${on ? 'on' : ''} ${t === 'more' ? 'ms-auto pe-0 w-auto' : ''}">${icon(name, size)}</span>`;
            }).join('');
            document.getElementById(id).insertAdjacentHTML('beforeend', html);
        }
        toolbar('standardBar', 'new ^ open ^ save ^ | pdf print preview | cut copy paste ^ | brush clear | undo ~ redo ~ | find spell | row ^ colm ^ | sort az za filter | image chart pivot | omega ^ link comment header | lock freeze ^ split | pen');
        toolbar('formatBar', '| bold italic under ^ | color ^ fill ^ | left center right | top middle *bottom | wrap | merge1 merge2 merge3 | money ^ *percent number date | decAdd decDel | indentIn indentOut | border ^ lines ^ more');

        const menu = [['File', 22], ['Edit', 26], ['View', 32], ['Insert', 39], ['Format', 49], ['Styles', 38], ['Sheet', 38], ['Data', 31], ['Tools', 35], ['Window', 55], ['Help', 31]];
        document.getElementById('menuBar').insertAdjacentHTML('beforeend', menu.map(m => `<span class="fit" data-w="${m[1]}">${m[0]}</span>`).join(''));
        document.getElementById('sideBar').insertAdjacentHTML('beforeend', ['menu', 'props', 'styles', 'gallery', 'compass', 'fx'].map(n => icon(n)).join(''));

        document.getElementById('colHeads').innerHTML = colWidths.map((w, i) =>
            `<div class="d-flex align-items-center justify-content-center ${cols[i] === 'P' ? 'current' : ''}" style="width:${w}px">${cols[i] || ''}</div>`).join('');
        document.getElementById('rowHeads').innerHTML = rowHeights.map((h, i) =>
            `<div class="d-flex align-items-center justify-content-center ${i === 25 ? 'current' : ''}" style="height:${h}px">${i + 1}</div>`).join('');

        const sheet = document.getElementById('sheet');
        sheet.style.gridTemplateColumns = colWidths.map(w => w + 'px').join(' ');
        sheet.style.gridTemplateRows = rowHeights.map(h => h + 'px').join(' ');
        const add = (ref, cls, html = '') => sheet.insertAdjacentHTML('beforeend', `<div class="${cls}" data-ref="${ref}">${html}</div>`);
        const mid = 'd-flex align-items-center justify-content-center text-center';

        // campaign progress bars
        const groups = [
            { name: 'I', end: 'J', pct: 'H', labels: ['33.51%', '88.13%', '22.07%', '46.75%', '16.77%'], fill: [34.5, 89, 23, 48, 18], w: 32 },
            { name: 'M', end: 'N', pct: 'L', labels: ['12.10%', '22.36%', '17.41%', '26.09%', '22.06%'], fill: [13.3, 23.5, 19, 27.8, 23.5], w: 32 },
            { name: 'Q', end: 'R', pct: 'P', labels: ['11.2%', '23.3%', '16.1%', '29.3%', '20.1%'], fill: [12.5, 23.8, 17.2, 30, 21.3], w: 26 }
        ];
        groups.forEach((g, gi) => g.labels.forEach((label, i) => {
            const r = 24 + i * 2;
            add(`${g.name}${r}:${g.end}${r}`, `bar-name ${mid}`, `<span class="fit" data-w="52">CAMPAIGN ${i + 1}</span>`);
            add(`${g.name}${r + 1}:${g.end}${r + 1}`, 'bar-track', `<div class="bar-fill ${g.fill[i] > 80 ? 'peak' : ''}" style="width:${g.fill[i]}%"></div>`);
            add(`${g.pct}${r + 1}`, `bar-pct ${gi ? '' : 'mid'} d-flex align-items-center justify-content-end`, `<span class="fit" data-w="${g.w}">${label}</span>`);
        }));
        add('P26', 'cell-cursor');

        // revenue table
        add('Q37:R37', `rev-head first ${mid}`, '<span class="fit" data-w="76">REVENUE</span>');
        add('S37', `rev-head ${mid}`, '<span class="fit" data-w="56">( POST – <span class="wavy">PRE</span> )</span>');
        add('T37:V37', `rev-head ${mid}`, '<span class="text-end"><span class="fit" data-w="89">( POST-CAMPAIGN REV</span><br><span class="fit" data-w="83">– CAMPAIGN SPEND )</span></span>');
        add('W37', `rev-head ${mid}`, '<span><span class="fit" data-w="79">( CAMPAIGN PROFIT</span><br><span class="fit" data-w="71">/ ACTUAL SPEND )</span></span>');

        const spans = ['D:G', 'H:H', 'I:I', 'J:J', 'K:K', 'L:L', 'M:M', 'N:N', 'O:O', 'P:P', 'Q:Q', 'R:R', 'S:S', 'T:V', 'W:W'];
        const heads = ['CAMPAIGN', 'IMPRESSIO<br>NS', 'CLICKS', 'CTR', 'ACQUISITIO<br>NS', 'BUDGET', 'SPEND', 'BUDGET<br>vs. SPEND', '<span class="wavy">CPC</span>', 'CPA',
            '<span class="wavy">PRE-<br>CAMPAIGN</span>', 'POST-<br>CAMPAIGN', 'REVENUE<br>GROWTH', 'CAMPAIGN<br>PROFIT', '<span class="wavy">ROI</span>'];
        const data = [
            ['CAMPAIGN 1', '123,123', '41,254', '33.51%', '63', '$25,000', '$23,661', '(1,339)', '$0.57', '$376', '$50,000', '$49,789', '(211)', '$26,128', '110.4%'],
            ['CAMPAIGN 2', '23,423', '20,643', '88.13%', '28', '$30,000', '$21,882', '(8,118)', '$1.06', '$782', '$60,000', '$62,009', '2,009', '$40,127', '183.4%'],
            ['CAMPAIGN 3', '121,212', '26,750', '22.07%', '41', '$50,000', '$22,076', '(27,924)', '$0.83', '$538', '$88,000', '$90,239', '2,239', '$68,163', '308.8%'],
            ['CAMPAIGN 4', '99,998', '46,752', '46.75%', '59', '$45,000', '$57,823', '12,823', '$1.24', '$980', '$67,000', '$74,657', '7,657', '$16,834', '29.1%'],
            ['CAMPAIGN 5', '356,321', '59,752', '16.77%', '93', '$50,000', '$62,484', '12,484', '$1.05', '$672', '$89,000', '$90,123', '1,123', '$27,639', '44.2%']
        ];
        const light = [3, 7, 8, 9, 12, 13, 14];
        const at = (i, r) => { const [a, b] = spans[i].split(':'); return `${a}${r}:${b}${r}`; };
        heads.forEach((h, i) => {
            add(at(i, 38), `th-cell ${mid}`, `<div>${h}</div>`);
            add(at(i, 45), i ? `th-cell ruled ${mid}` : `th-cell ruled th-overall ${mid}`, i ? `<div>${h}</div>` : '<div class="pt-3"><span class="fit" data-w="76">OVERALL</span></div>');
        });
        data.forEach((row, r) => row.forEach((v, i) => {
            const bg = light.includes(i) ? 'sheet-panel' : 'sheet-dark';
            if (i === 7 || i === 12) add(at(i, 39 + r), `td-cell ${bg} d-flex align-items-center justify-content-between ps-1`, `<span>$</span><span class="${v[0] === '(' ? '' : 'pe-1'}">${v}</span>`);
            else add(at(i, 39 + r), `td-cell ${i ? '' : 'name'} ${bg} ${mid}`, v);
        }));
        add('D38:W38', 'td-rule');

        document.querySelectorAll('[data-ref]').forEach(el => {
            const [a, b = a] = el.dataset.ref.split(':');
            const c1 = cols.indexOf(a[0]) + 1, c2 = cols.indexOf(b[0]) + 2;
            el.style.gridArea = `${a.slice(1)} / ${c1} / ${+b.slice(1) + 1} / ${c2}`;
        });
        sheet.insertAdjacentHTML('beforeend', '<svg class="pointer" width="15" height="22" viewBox="0 0 15 22"><path d="M1 1v17l4-3.500 3 6.500 2.500-1-2.800-6.500H13z" fill="#fff" stroke="#222"/></svg>');

        // charts
        const txt = (x, y, s, w, attrs) => `<text x="${x}" y="${y}" textLength="${w}" lengthAdjust="spacingAndGlyphs" ${attrs}>${s}</text>`;
        const block = (x, w, top, base, dx, dy, c) => `<g stroke="#10262c" stroke-width="1.400" stroke-linejoin="round"><path d="M${x} ${top}l${dx} ${-dy}h${w}l${-dx} ${dy}z" fill="${c[1]}"/><path d="M${x + w} ${top}l${dx} ${-dy}V${base - dy}l${-dx} ${dy}z" fill="${c[2]}"/><path d="M${x} ${top}h${w}V${base}h${-w}z" fill="${c[0]}"/></g>`;
        const blue = ['#82b5c1', '#699aa4', '#67929b'], white = ['#e4f5fb', '#ccd9dc', '#b5c4c8'];

        let s = '<rect x=".5" y=".5" width="457" height="222" fill="#14505d" stroke="#6d979d"/>';
        s += txt(228.7, 26, 'BUDGET VS. SPEND', 148, 'font-size="16.500" font-weight="400" fill="#dce6e6" stroke="#dce6e6" stroke-width=".3" text-anchor="middle"');
        for (let i = 0; i < 8; i++) {
            const y = 39.3 + i * 21.35;
            s += `<path d="M47.300 ${y + 14}L65.300 ${y}H441.300" fill="none" stroke="#10424e"/>`;
            s += txt(44, 55.2 + i * 21.8, i < 7 ? `$${70 - i * 10},000` : '$0', i < 7 ? 29 : 9, 'font-size="8" fill="#e3efd8" text-anchor="end"');
        }
        s += '<path d="M47.300 53.300V203M65.300 39.300V188.700M441.300 39.300V188.700L423 203.700" fill="none" stroke="#10424e"/>';
        [[25000, 23661], [30000, 21882], [50000, 22076], [45000, 57823], [50000, 62484]].forEach((p, i) => {
            const x = 67 + i * 75.3;
            p.forEach((v, k) => {
                const top = 200.3 - v * .00216;
                const label = txt(x + 12 + k * 21.5, top - 6.5, '$' + v.toLocaleString('en-US'), 29, 'font-size="8.300" font-weight="400" fill="#cfdfd6" text-anchor="middle"');
                const bar = block(x + k * 21.5, 21.5, top, 200.3, 8.7, 6.3, k ? white : blue);
                s += bar + label;
            });
            // the taller second bar hides the end of its neighbour's label
            if (p[1] > p[0]) { const top = 200.3 - p[1] * .00216; s += `<path d="M${x + 21.500} ${top}h21.500V200.300h-21.500z" fill="${white[0]}" stroke="#10262c" stroke-width="1.400"/>`; }
            s += txt(84 + i * 75.3, 215.300, 'CAMPAIGN ' + (i + 1), 50.7, 'font-size="8" fill="#e3efd8" text-anchor="middle"');
        });
        document.getElementById('spendChart').innerHTML = s;

        s = '<rect x=".5" y=".5" width="178" height="192" fill="#14505d" stroke="#8aa9ad"/>';
        for (let i = 0; i < 11; i++) {
            s += `<path d="M58 ${29 + i * 13}L74 ${15.700 + i * 13}H167" fill="none" stroke="#10424e" stroke-width=".8"/>`;
            s += txt(50.7, 31.2 + i * 13.4, `$${200 - i * 2},000`, 41, 'font-size="9" fill="#e3eee9" text-anchor="end"');
        }
        s += '<path d="M58 161h96l13-15" fill="none" stroke="#10424e"/><path d="M72 25l8-6.700h20V151l-7.500 7H72z" fill="#000"/>';
        s += block(121.4, 19, 105.7, 158, 8.3, 6, white);
        s += txt(82, 16, '$200,000', 34, 'font-size="8.500" font-weight="400" fill="#cfdfd6" text-anchor="middle"') + txt(131, 98, '$187,926', 34, 'font-size="8.500" font-weight="400" fill="#cfdfd6" text-anchor="middle"');
        s += txt(77.5, 172.500, 'BUDGET', 33, 'font-size="8.500" font-weight="400" fill="#e9f2ee" text-anchor="middle"') + txt(127, 172.500, 'SPEND', 27, 'font-size="8.500" font-weight="400" fill="#e9f2ee" text-anchor="middle"');
        document.getElementById('totalChart').innerHTML = s;

        // stretch each label to its width
        const ctx = document.createElement('canvas').getContext('2d');
        document.querySelectorAll('.fit').forEach(el => {
            const cs = getComputedStyle(el);
            ctx.font = `${cs.fontStyle} ${cs.fontWeight} ${cs.fontSize} ${cs.fontFamily}`;
            ctx.letterSpacing = cs.letterSpacing === 'normal' ? '0px' : cs.letterSpacing;
            const m = ctx.measureText(el.textContent);
            const k = el.dataset.w / (m.actualBoundingBoxLeft + m.actualBoundingBoxRight);
            el.innerHTML = `<span style="transform:scaleX(${k}) translateX(${m.actualBoundingBoxLeft}px)">${el.innerHTML}</span>`;
            el.style.width = el.dataset.w + 'px';
        });
    </script>
</body>
</html>
